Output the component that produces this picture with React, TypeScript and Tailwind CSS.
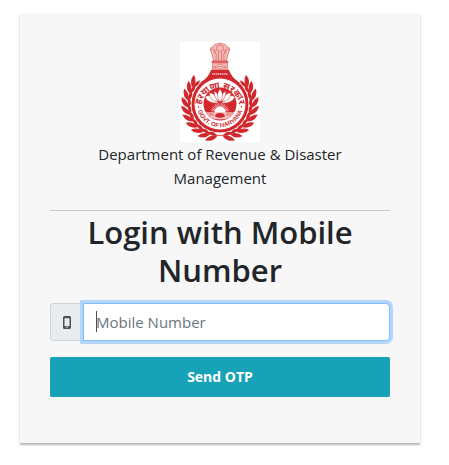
import React, { useState } from 'react';

const RED = '#d0282c';

// leaves of the wreath, as angles measured from the bottom of the seal
const leafAngles = [6, 19, 32, 45, 58, 71, 84, 97, 110, 122];
const rayAngles = [-80, -68, -56, -44, -32, -20, -8, 8, 20, 32, 44, 56, 68, 80];

const Branch: React.FC = () => (
  <g fill={RED}>
    {leafAngles.map((angle) => (
      <g key={angle} transform={`rotate(${angle} 40 62)`}>
        <path d="M41 93.500 Q37 101 29 99.500 Q33 93 41 93.500Z" />
        <path d="M40 93.500 Q35.500 95.500 30.500 91.500 Q36.500 89 40 93.500Z" />
      </g>
    ))}
    <path d="M40 93.500 A31.500 31.500 0 0 1 12.500 46" fill="none" stroke={RED} strokeWidth="0.8" />
  </g>
);

const Emblem: React.FC = () => (
  <svg
    viewBox="0 0 80 100"
    className="block h-[100px] w-20 bg-white"
    role="img"
    aria-label="Government of Haryana">
    <defs>
      <path id="upper" d="M20.500 66 A19 19 0 0 1 59.500 66" />
      <path id="lower" d="M16.800 62 A23.200 23.200 0 0 0 63.200 62" />
    </defs>
    <Branch />
    <g transform="translate(80 0) scale(-1 1)">
      <Branch />
    </g>

    {/* lion capital */}
    <g fill="#f3b9b6" stroke="#dc6461" strokeWidth="0.7">
      <path d="M34 4 Q34 1.500 37 2 Q40 0 43 2 Q46 1.500 46 4 L49 5.500 Q51 8 48.500 10 L46.500 19 H33.500 L31.500 10 Q29 8 31 5.500Z" />
      <path
        d="M37 4 Q40 2 43 4 L43.500 8 Q40 11 36.500 8Z M31 7 L35 8 L34 11 M49 7 L45 8 L46 11 M35 9 Q37 12 36 19 M45 9 Q43 12 44 19 M38.500 10 V19 M41.500 10 V19"
        fill="none"
      />
      <path d="M32 19 H48 V21 H32Z" fill="#dc6461" />
      <path d="M33 21 H47 L48 28 H32Z" />
      <circle cx="40" cy="24.500" r="2.500" fill="#fff" />
      <path
        d="M37.500 24.500 H42.500 M40 22 V27 M34 27 V24 L36 25 V27 M44 27 V24 L46 25 V27"
        fill="none"
      />
    </g>
    <path d="M31 28 H49 Q51 35 60 41 H20 Q29 35 31 28Z" fill={RED} />
    <circle cx="40" cy="62" r="28.500" fill={RED} />
    <path d="M32 32 H48" stroke="#fff" strokeWidth="1.2" strokeDasharray="1.500 0.500" />

    {/* lettered ring */}
    <circle cx="40" cy="62" r="25.500" fill="#fff" />
    <text
      fill={RED}
      fontSize="9"
      fontWeight="700"
      textAnchor="middle"
      className="font-['Noto_Sans','Noto_Sans_Devanagari',sans-serif]">
      <textPath href="#upper" startOffset="50%">
        हरयाणा सरकार
      </textPath>
    </text>
    <text
      fill={RED}
      fontSize="6"
      fontWeight="700"
      textAnchor="middle"
      className="font-['Liberation_Sans',Arial,sans-serif]">
      <textPath href="#lower" startOffset="50%">
        GOVT. OF HARYANA
      </textPath>
    </text>
    <circle cx="18.500" cy="65" r="0.8" fill={RED} />
    <circle cx="61.500" cy="65" r="0.8" fill={RED} />

    {/* lotus, rays and field */}
    <circle cx="40" cy="62" r="16.500" fill={RED} />
    <g fill="#fff" stroke={RED} strokeWidth="0.5">
      <path d="M25 55 Q29 51 35 57 Q37 60 39 61 Q28 62 25 55Z" />
      <path d="M55 55 Q51 51 45 57 Q43 60 41 61 Q52 62 55 55Z" />
      <path d="M29 51 Q35 50 38 60 Q30 59 29 51Z" />
      <path d="M51 51 Q45 50 42 60 Q50 59 51 51Z" />
      <path d="M34 49 Q39 51 40 60 Q34 57 34 49Z" />
      <path d="M46 49 Q41 51 40 60 Q46 57 46 49Z" />
      <path d="M40 47 Q45 53 40 60 Q35 53 40 47Z" />
    </g>
    <g stroke="#f7c9c7" strokeWidth="0.7">
      {rayAngles.map((angle) => (
        <path key={angle} d="M40 65 V61" transform={`rotate(${angle} 40 70)`} />
      ))}
    </g>
    <path d="M26 70 H54 Q51 77.500 40 77.500 Q29 77.500 26 70Z" fill="#f5c6c4" />
    <path d="M34.500 70 A5.500 5.500 0 0 1 45.500 70Z" fill="#fff" />
    <path d="M35 74.500 Q35 71 40 71 Q45 71 45 74.500 Q40 77 35 74.500Z" fill={RED} />
    <path d="M27 71 H34 M46 71 H53 M29 73 H34 M46 73 H51" stroke={RED} strokeWidth="0.6" />
  </svg>
);

const PhoneIcon: React.FC = () => (
  <svg viewBox="0 0 8 13" className="h-[13px] w-2" role="img" aria-label="Mobile Number">
    <path
      fill="#495057"
      fillRule="evenodd"
      d="M1.500 0 H6.500 Q8 0 8 1.500 V11.500 Q8 13 6.500 13 H1.500 Q0 13 0 11.500 V1.500 Q0 0 1.500 0Z M1.500 2.200 V10.200 H6.500 V2.200Z M3.300 11.600 A0.700 0.700 0 1 0 4.700 11.600 A0.700 0.700 0 1 0 3.300 11.600Z"
    />
  </svg>
);

const App: React.FC = () => {
  const [mobile, setMobile] = useState('');

  return (
    <main className="bg-white pt-[13px] pr-[29px] pb-5 pl-5 font-['Open_Sans','Segoe_UI',sans-serif] text-[#212529]">
      <form
        onSubmit={(e) => e.preventDefault()}
        className="mx-auto w-full max-w-[400px] bg-[#f7f7f7] px-[30px] pt-[29px] pb-[46px] shadow-[0_2px_2px_rgba(0,0,0,0.3)]">
        <div className="flex flex-col items-center text-center text-[15px] leading-6">
          <Emblem />
          <p className="max-w-[280px]">Department of Revenue &amp; Disaster Management</p>
        </div>

        <hr className="mt-5 border-t border-[#c8c8c8]" />
        <h2 className="mt-0.5 mb-3.5 text-center text-[31px] leading-[38px] font-semibold">
          Login with Mobile Number
        </h2>

        <div className="flex h-[38px]">
          <label
            htmlFor="mobile"
            className="flex w-[33px] shrink-0 items-center justify-center rounded-l border border-r-0 border-[#ced4da] bg-[#e9ecef]">
            <PhoneIcon />
          </label>
          <div className="relative flex min-w-0 flex-1">
            <input
              id="mobile"
              type="tel"
              autoFocus
              value={mobile}
              onChange={(e) => setMobile(e.target.value)}
              placeholder="Mobile Number"
              className="w-full rounded-r border border-[#80bdff] bg-white px-3 text-[15px] text-[#495057] shadow-[0_0_0_3px_#b5d6fb] outline-none placeholder:text-[#6c757d] placeholder-shown:caret-transparent"
            />
            {/* caret shown while the field is empty */}
            {!mobile && (
              <span className="pointer-events-none absolute top-2 left-[13px] h-[21px] w-px bg-[#495057]" />
            )}
          </div>
        </div>

        <button
          type="submit"
          className="mt-4 h-10 w-full rounded-xs bg-[#17a2b8] text-sm font-bold text-white">
          Send OTP
        </button>
      </form>
    </main>
  );
};

export default App;
